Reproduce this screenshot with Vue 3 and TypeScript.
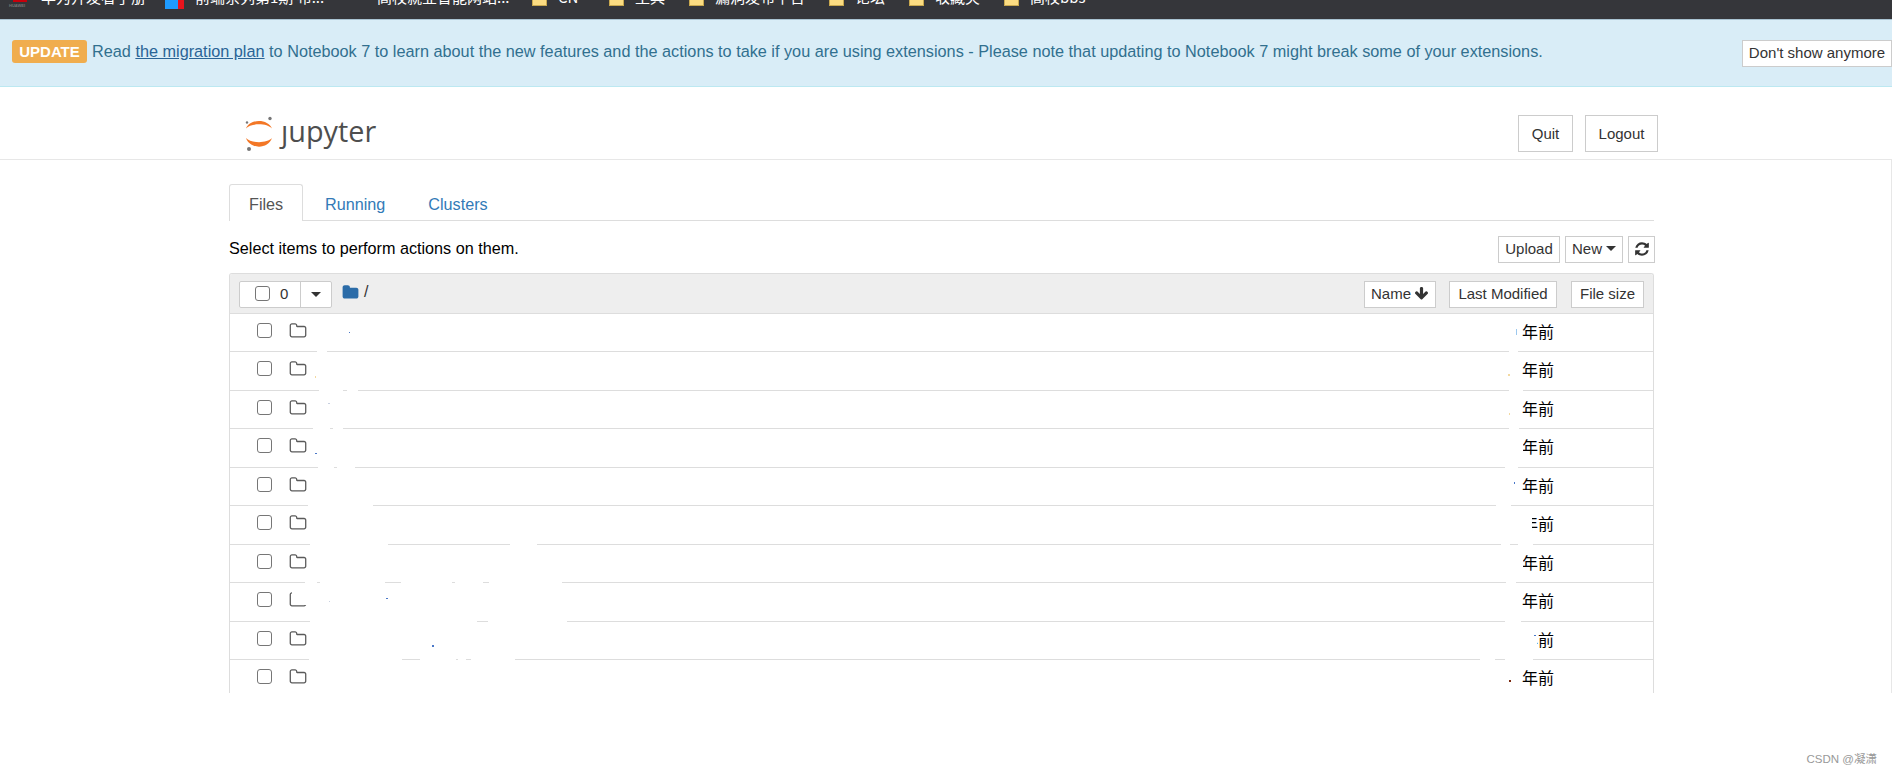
<script setup lang="ts">
interface Row { gaps: number[][]; dateMask: number; broken?: boolean; specks: number[][] }
const rowLeft = 230

const rows: Row[] = [
  { gaps: [], dateMask: 0, specks: [[1516, 15, 1, 6, 0], [349, 18, 1, 1, 1]] },
  { gaps: [[317, 327], [1509, 1518]], dateMask: 0, specks: [[1508, 22, 2, 2, 2], [315, 24, 1, 2, 2]] },
  { gaps: [[319, 343], [347, 358], [1509, 1523]], dateMask: 0, specks: [[1509, 22, 1, 2, 2], [328, 12, 2, 1, 3]] },
  { gaps: [[313, 330], [333, 343], [1509, 1519]], dateMask: 2, specks: [[315, 24, 2, 1, 1]] },
  { gaps: [[318, 334], [337, 355], [1505, 1518]], dateMask: 0, specks: [[1514, 14, 1, 2, 1]] },
  { gaps: [[308, 373], [1496, 1511]], dateMask: 11, specks: [] },
  { gaps: [[310, 388], [510, 537], [1501, 1510], [1518, 1533]], dateMask: 2, specks: [] },
  { gaps: [[305, 317], [320, 385], [401, 452], [455, 483], [489, 562], [1506, 1516]], dateMask: 0, broken: true, specks: [[386, 15, 2, 1, 1], [329, 18, 1, 1, 3]] },
  { gaps: [[310, 477], [488, 567], [1505, 1521]], dateMask: 16, specks: [[432, 23, 2, 2, 1], [1534, 13, 2, 1, 1]] },
  { gaps: [[309, 402], [420, 456], [458, 466], [471, 515], [1480, 1495], [1505, 1533]], dateMask: 0, specks: [[1509, 20, 2, 2, 4]] },
]
const speckColors = ['#9cc8ee', '#4a78c8', '#f3d9a0', '#c8d0e0', '#7a2a10']

const gapStyle = (g: number[]) => ({ left: `${g[0] - rowLeft}px`, width: `${g[1] - g[0]}px` })
const speckStyle = (s: number[]) => ({
  left: `${s[0] - rowLeft}px`, top: `${s[1]}px`, width: `${s[2]}px`, height: `${s[3]}px`, background: speckColors[s[4]],
})
const maskStyle = (w: number) => ({ width: `${w}px` })

const bookmarks = [
  { label: '华为开发者手册', icon: 'huawei' },
  { label: '前端系列第1期 布...', icon: 'cube' },
  { label: '高校就业智能网站...', icon: 'none' },
  { label: 'CN', icon: 'folder' },
  { label: '工具', icon: 'folder' },
  { label: '漏洞发布平台', icon: 'folder' },
  { label: '论坛', icon: 'folder' },
  { label: '收藏夹', icon: 'folder' },
  { label: '高校bbs', icon: 'folder' },
]

const folderO = 'M1600 1312v-704q0-40-28-68t-68-28h-704q-40 0-68-28t-28-68v-64q0-40-28-68t-68-28h-320q-40 0-68 28t-28 68v960q0 40 28 68t68 28h1216q40 0 68-28t28-68zm128-704v704q0 92-66 158t-158 66h-1216q-92 0-158-66t-66-158v-960q0-92 66-158t158-66h320q92 0 158 66t66 158v32h672q92 0 158 66t66 158z'
</script>

<template>
  <div class="page">
    <div class="topbar">
      <div class="marks">
        <div v-for="b in bookmarks" :key="b.label" class="mark">
          <span v-if="b.icon === 'huawei'" class="ic-huawei"><i class="petal"></i><small>HUAWEI</small></span>
          <span v-else-if="b.icon === 'cube'" class="ic-cube"><i></i><b></b></span>
          <span v-else-if="b.icon === 'folder'" class="ic-folder"></span>
          <span v-else class="ic-none"></span>
          <span class="mark-label">{{ b.label }}</span>
        </div>
      </div>
    </div>

    <div class="alert">
      <div class="alert-msg">
        <span class="label">UPDATE</span>
        <span class="alert-text">Read <a class="alert-link">the migration plan</a> to Notebook 7 to learn about the new features and the actions to take if you are using extensions - Please note that updating to Notebook 7 might break some of your extensions.</span>
      </div>
      <button class="btn dismiss">Don't show anymore</button>
    </div>

    <header class="header">
      <div class="logo">
        <svg class="logo-mark" viewBox="0 0 28 36" width="28" height="36">
          <path fill="#f37726" d="M1 12.500C5 2.500 23 2.500 27 12.500C22 6.800 6 6.800 1 12.500Z" />
          <path fill="#f37726" d="M1 22C6 27.500 22 27.500 27 22C23 33.500 5 33.500 1 22Z" />
          <circle cx="25" cy="2.500" r="1.700" fill="#767677" />
          <circle cx="2" cy="6.500" r="1.200" fill="#767677" />
          <circle cx="4" cy="33" r="2" fill="#767677" />
        </svg>
        <span class="wordmark">ȷupyter</span>
      </div>
      <div class="header-btns">
        <button class="btn head-btn">Quit</button>
        <button class="btn head-btn">Logout</button>
      </div>
    </header>

    <main class="main">
      <nav class="tabs">
        <a class="tab active">Files</a>
        <a class="tab">Running</a>
        <a class="tab">Clusters</a>
      </nav>

      <div class="toolbar">
        <span class="hint">Select items to perform actions on them.</span>
        <div class="tool-btns">
          <button class="btn tool">Upload</button>
          <button class="btn tool">New<i class="caret"></i></button>
          <button class="btn tool refresh">
            <svg viewBox="0 0 1792 1792" width="16" height="16"><path fill="#333" d="M1639 1056q0 5-1 7-64 268-268 434.500t-478 166.500q-146 0-282.500-55t-243.500-157l-129 129q-19 19-45 19t-45-19-19-45v-448q0-26 19-45t45-19h448q26 0 45 19t19 45-19 45l-137 137q71 66 161 102t187 36q134 0 250-65t186-179q11-17 53-117 8-23 30-23h192q13 0 22.500 9.500t9.500 22.500zm25-800v448q0 26-19 45t-45 19h-448q-26 0-45-19t-19-45 19-45l138-138q-148-137-349-137-134 0-250 65t-186 179q-11 17-53 117-8 23-30 23h-199q-13 0-22.500-9.500t-9.500-22.500v-7q65-268 270-434.500t480-166.500q146 0 284 55.500t245 156.500l130-129q19-19 45-19t45 19 19 45z" /></svg>
          </button>
        </div>
      </div>

      <section class="list">
        <div class="list-head">
          <div class="select-group">
            <span class="select-main"><i class="check"></i><span class="count">0</span></span>
            <span class="select-drop"><i class="caret big"></i></span>
          </div>
          <svg class="crumb-icon" viewBox="0 0 1792 1792" width="17" height="17"><path fill="#2b6ca8" d="M1728 608v704q0 92-66 158t-158 66h-1216q-92 0-158-66t-66-158v-960q0-92 66-158t158-66h320q92 0 158 66t66 158v32h672q92 0 158 66t66 158z" /></svg>
          <span class="crumb">/</span>
          <div class="sorts">
            <button class="btn sort s-name">Name
              <svg viewBox="0 0 1792 1792" width="15" height="15"><path fill="#333" d="M1675 832q0 53-37 90l-651 652q-39 37-91 37-53 0-90-37l-651-652q-38-36-38-90 0-53 38-91l74-75q39-37 91-37 53 0 90 37l294 294v-704q0-52 38-90t90-38h128q52 0 90 38t38 90v704l294-294q37-37 90-37 52 0 91 37l75 75q37 39 37 91z" /></svg>
            </button>
            <button class="btn sort s-mod">Last Modified</button>
            <button class="btn sort s-size">File size</button>
          </div>
        </div>

        <div v-for="(r, i) in rows" :key="i" class="row">
          <span v-for="g in r.gaps" :key="g[0]" class="gap" :style="gapStyle(g)"></span>
          <span v-for="s in r.specks" :key="s[0]" class="speck" :style="speckStyle(s)"></span>
          <i class="check row-check"></i>
          <span class="row-icon">
            <svg viewBox="0 0 1792 1792" width="18" height="18"><path fill="#5a5a5a" :d="folderO" /></svg>
            <i v-if="r.broken" class="icon-mask"></i>
          </span>
          <span class="date">年前<i v-if="r.dateMask" class="date-mask" :style="maskStyle(r.dateMask)"></i></span>
        </div>
      </section>
    </main>

    <div class="watermark">CSDN @凝潇</div>
  </div>
</template>

<style>
html, body { margin: 0; background: #fff; overflow: hidden; }
</style>

<style scoped>
.page {
  position: relative;
  width: 1892px;
  height: 774px;
  overflow: hidden;
  font-family: "Liberation Sans", "Noto Sans CJK SC", sans-serif;
  color: #000;
  background: #fff;
}
.topbar {
  height: 20px;
  box-sizing: border-box;
  background: #35363a;
  border-bottom: 1px solid #a9c3d1;
  overflow: hidden;
}
.marks {
  display: grid;
  grid-template-columns: 155px 185px 182px 77px 80px 140px 80px 95px auto;
  margin: -13px 0 0 10px;
  height: 20px;
}
.mark { display: flex; align-items: flex-end; gap: 11px; height: 20px; }
.mark-label {
  font: 15px/20px "Noto Sans CJK SC", sans-serif;
  color: #fff;
  white-space: nowrap;
}
.ic-huawei { position: relative; display: block; width: 20px; height: 20px; }
.ic-huawei .petal { position: absolute; left: 3px; top: 12px; width: 14px; height: 3px; background: #c7000b; }
.ic-huawei small {
  position: absolute; left: -1px; top: 16px;
  font: bold 4px/5px "Liberation Sans", sans-serif; color: #777;
}
.ic-cube { display: flex; height: 20px; width: 19px; transform: translateY(2px); }
.ic-cube i { display: block; width: 13px; background: #1e9bff; }
.ic-cube b { display: block; width: 6px; background: #e8141c; }
.ic-folder {
  display: block; width: 15px; height: 19px;
  background: #fbdc82; border: 1px solid #c9a94f; box-sizing: border-box;
  transform: translateY(-1px);
}
.ic-none { display: block; width: 16px; }

.alert {
  height: 67px;
  box-sizing: border-box;
  background: #d9edf7;
  border-bottom: 1px solid #bce8f1;
  display: flex;
  justify-content: space-between;
  align-items: flex-start;
  padding: 20px 0 0 12px;
}
.alert-msg { display: flex; align-items: center; gap: 5px; color: #31708f; font-size: 16.25px; line-height: 23px; }
.label {
  background: #f0ad4e;
  color: #fff;
  font-weight: bold;
  font-size: 15px;
  line-height: 23px;
  height: 23px;
  width: 75px;
  text-align: center;
  border-radius: 3px;
}
.alert-link { color: #2a6496; text-decoration: underline; }
.btn {
  display: inline-flex;
  align-items: center;
  justify-content: center;
  box-sizing: border-box;
  background: #fff;
  border: 1px solid #ccc;
  color: #333;
  font-family: "Liberation Sans", sans-serif;
  font-size: 15px;
  padding: 0;
  white-space: nowrap;
}
.dismiss { width: 150px; height: 27px; padding-bottom: 2px; }

.header {
  height: 73px;
  box-sizing: border-box;
  border-bottom: 1px solid #e7e7e7;
  display: flex;
  justify-content: space-between;
  padding: 0 234px 0 245px;
}
.logo { display: flex; align-items: flex-start; gap: 8px; padding-top: 29px; }
.logo-mark { display: block; }
.wordmark {
  font: 400 28.8px/34px "Open Sans", sans-serif;
  color: #4e4e4e;
  margin-top: -2px;
}
.header-btns { display: flex; gap: 12px; padding-top: 28px; }
.head-btn { height: 37px; }
.head-btn:first-child { width: 55px; }
.head-btn:last-child { width: 73px; }

.main {
  width: 1425px;
  margin-left: 229px;
  padding-top: 24px;
  box-sizing: border-box;
}
.page::after {
  content: "";
  position: absolute;
  right: 0;
  top: 160px;
  height: 533px;
  width: 1px;
  background: #e7e7e7;
}
.tabs {
  display: flex;
  height: 37px;
  box-sizing: border-box;
  border-bottom: 1px solid #ddd;
  font-size: 16.2px;
  line-height: 38px;
}
.tab { color: #337ab7; padding: 0 20px; border: 1px solid transparent; border-bottom: 0; height: 37px; box-sizing: border-box; margin-right: 1px; }
.tab.active {
  color: #555;
  background: #fff;
  border-color: #ddd;
  border-radius: 3px 3px 0 0;
  width: 74px;
  padding: 0 19px;
}
.toolbar {
  height: 52px;
  display: flex;
  justify-content: space-between;
  align-items: flex-start;
  padding-top: 15px;
  box-sizing: border-box;
  margin-right: -1px;
}
.hint { font-size: 16.2px; line-height: 24px; }
.tool-btns { display: flex; gap: 5px; }
.tool { height: 27px; padding-bottom: 2px; }
.tool:nth-child(1) { width: 62px; }
.tool:nth-child(2) { width: 58px; }
.refresh { width: 27px; }
.caret {
  display: inline-block;
  width: 0; height: 0;
  margin-left: 4px;
  border-top: 5px solid #333;
  border-left: 5px solid transparent;
  border-right: 5px solid transparent;
}
.caret.big { margin: 0; }

.list {
  height: 420px;
  box-sizing: border-box;
  border: 1px solid #ddd;
  border-bottom: 0;
  border-radius: 3px 3px 0 0;
  overflow: hidden;
}
.list-head {
  height: 39px;
  background: #eee;
  display: flex;
  align-items: flex-start;
  padding: 7px 9px 0 9px;
  box-sizing: border-box;
}
.select-group {
  display: flex;
  width: 93px;
  height: 27px;
  box-sizing: border-box;
  background: #fff;
  border: 1px solid #ccc;
  border-radius: 2px;
}
.select-main {
  width: 61px;
  display: flex;
  align-items: center;
  padding: 0 0 2px 15px;
  gap: 10px;
  box-sizing: border-box;
  border-right: 1px solid #ccc;
}
.select-drop { flex: 1; display: flex; align-items: center; justify-content: center; }
.check {
  display: block;
  box-sizing: border-box;
  width: 15px;
  height: 15px;
  border: 1.500px solid #767676;
  border-radius: 3px;
  background: #fff;
}
.count { font-size: 15px; color: #333; }
.crumb-icon { margin: 3px 0 0 10px; }
.crumb { font-size: 16px; color: #333; margin: 2px 0 0 5px; line-height: 18px; }
.sorts { margin-left: auto; display: flex; }
.sort { height: 27px; gap: 3px; padding-bottom: 2px; }
.s-name { width: 72px; }
.s-mod { width: 108px; margin-left: 13px; }
.s-size { width: 73px; margin-left: 14px; }

.row {
  position: relative;
  height: 38.44px;
  box-sizing: border-box;
  border-top: 1px solid #ddd;
  display: flex;
  align-items: flex-start;
  padding-left: 27px;
}
.gap { position: absolute; top: -1px; height: 1px; background: #fff; }
.speck { position: absolute; z-index: 1; }
.row-check { margin-top: 9px; }
.row-icon { position: relative; display: block; margin: 8px 0 0 17px; width: 18px; height: 18px; }
.row-icon svg { display: block; }
.icon-mask {
  position: absolute; left: 3px; top: 0; width: 15px; height: 14px; background: #fff;
}
.date {
  position: absolute;
  left: 1292px;
  top: 7px;
  font: 16px/20px "Noto Sans CJK SC", sans-serif;
  color: #000;
}
.date-mask {
  position: absolute;
  left: -1px;
  top: 0;
  height: 20px;
  background: #fff;
}
.watermark {
  position: absolute;
  right: 15px;
  top: 751px;
  font: 11.500px/16px "Liberation Sans", "Noto Sans CJK SC", sans-serif;
  color: #999;
}
</style>
